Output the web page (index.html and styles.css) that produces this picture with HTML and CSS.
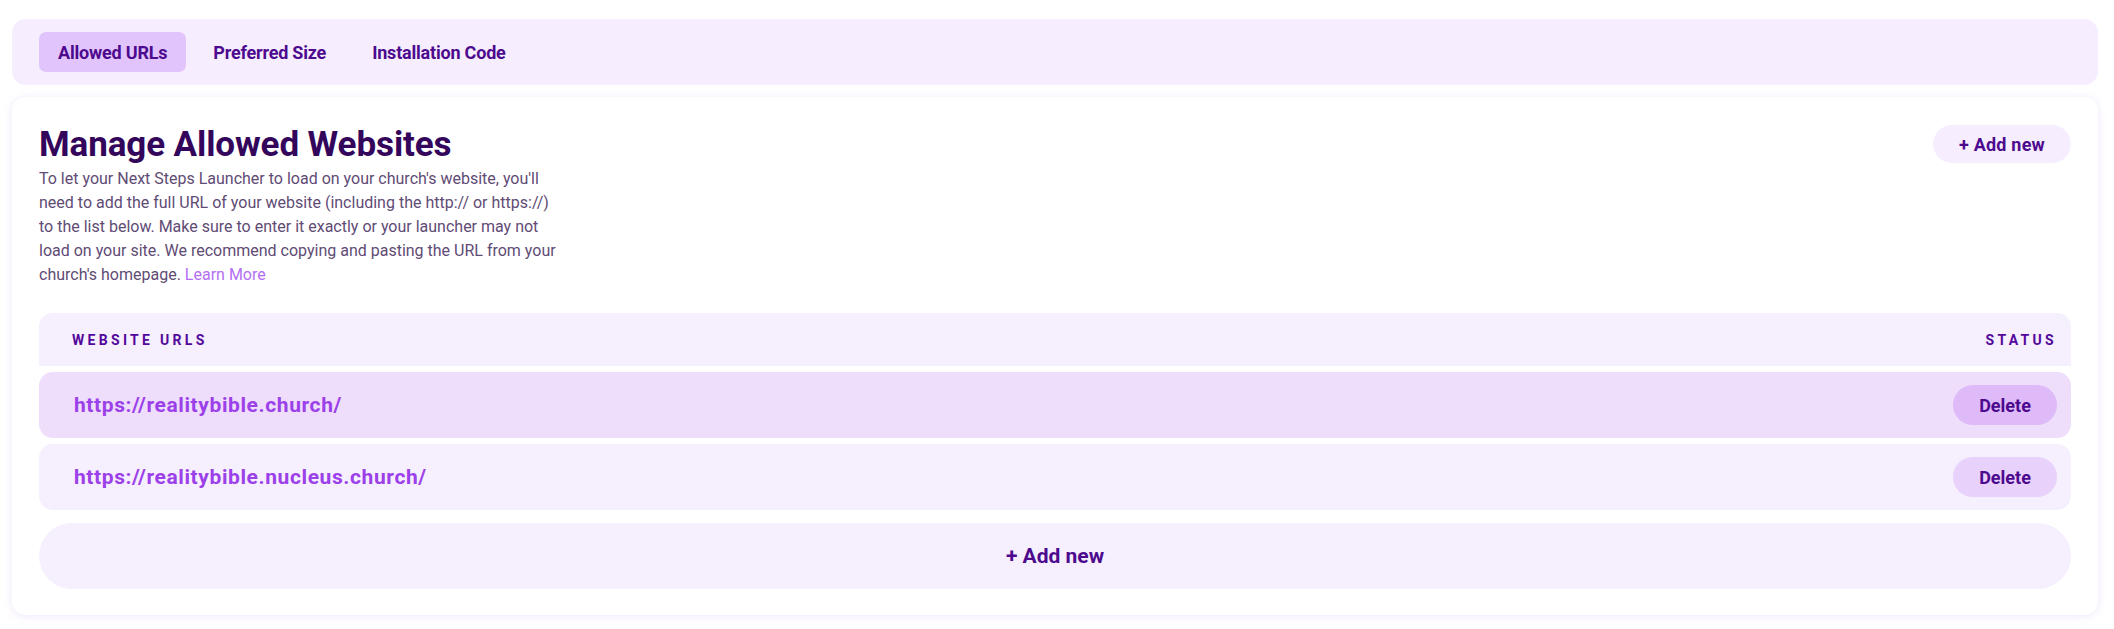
FILE: index.html
```html
<!DOCTYPE html>
<html lang="en">
<head>
<meta charset="utf-8">
<title>Manage Allowed Websites</title>
<link rel="stylesheet" href="styles.css">
</head>
<body>
<nav class="tabs">
  <button class="tab tab-active">Allowed URLs</button>
  <button class="tab">Preferred Size</button>
  <button class="tab">Installation Code</button>
</nav>
<main class="card">
  <div class="card-head">
    <div class="intro">
      <h1 class="title">Manage Allowed Websites</h1>
      <p class="desc">To let your Next Steps Launcher to load on your church's website, you'll need to add the full URL of your website (including the http:// or https://) to the list below. Make sure to enter it exactly or your launcher may not load on your site. We recommend copying and pasting the URL from your church's homepage. <a class="learn" href="#">Learn More</a></p>
    </div>
    <button class="add-small">+ Add new</button>
  </div>
  <div class="table">
    <div class="thead">
      <span>WEBSITE URLS</span>
      <span>STATUS</span>
    </div>
    <div class="row row-hover">
      <span class="url">https://realitybible.church/</span>
      <button class="delete delete-hover">Delete</button>
    </div>
    <div class="row">
      <span class="url">https://realitybible.nucleus.church/</span>
      <button class="delete">Delete</button>
    </div>
  </div>
  <button class="add-wide">+ Add new</button>
</main>
</body>
</html>
```
FILE: styles.css
```css
* { box-sizing: border-box; }
html, body { background: #ffffff; }
body {
  margin: 0;
  padding: 19px 16px 14px 12px;
  font-family: Roboto, "Liberation Sans", sans-serif;
  color: #4a0a8a;
}
button { font-family: inherit; border: 0; cursor: pointer; }

.tabs {
  display: flex;
  align-items: center;
  gap: 8px;
  height: 66px;
  padding: 0 27px;
  background: #f6eefe;
  border-radius: 14px;
}
.tab {
  height: 40px;
  padding: 0 19px;
  background: transparent;
  border-radius: 7px;
  font-size: 18px;
  font-weight: 700;
  color: #4d0a8e;
  letter-spacing: -0.2px;
}
.tab-active { background: #e2c4fc; }

.card {
  margin-top: 12px;
  background: #ffffff;
  border-radius: 14px;
  padding: 28px 27px 26px;
  box-shadow: 0 1px 10px rgba(140, 80, 220, 0.14);
}
.card-head {
  display: flex;
  justify-content: space-between;
  align-items: flex-start;
}
.intro { width: 524px; }
.title {
  margin: 0;
  font-size: 35px;
  line-height: 40px;
  font-weight: 700;
  color: #33065c;
  letter-spacing: -0.1px;
  white-space: nowrap;
}
.desc {
  margin: 2px 0 0;
  font-size: 16px;
  line-height: 24px;
  color: #5f4b75;
  letter-spacing: 0;
}
.learn { color: #b46ff4; text-decoration: none; }

.add-small {
  height: 38px;
  padding: 0 26px;
  border-radius: 19px;
  background: #f6eefe;
  font-size: 18px;
  font-weight: 700;
  color: #4d0a8e;
  letter-spacing: 0.2px;
}

.table {
  margin-top: 26px;
  display: flex;
  flex-direction: column;
  gap: 6px;
}
.thead {
  display: flex;
  justify-content: space-between;
  align-items: center;
  height: 53px;
  padding: 0 14px 0 33px;
  background: #f6effe;
  border-radius: 14px 14px 0 0;
  font-size: 14px;
  font-weight: 700;
  letter-spacing: 3.3px;
  color: #53089b;
}
.row {
  display: flex;
  justify-content: space-between;
  align-items: center;
  height: 66px;
  padding: 0 14px 0 35px;
  background: #f6effe;
  border-radius: 14px;
}
.row-hover { background: #eedefc; }
.url {
  font-size: 21px;
  font-weight: 700;
  color: #9c40e9;
  letter-spacing: 0.6px;
}
.delete {
  width: 104px;
  height: 40px;
  border-radius: 20px;
  background: #e8d1fb;
  font-size: 18px;
  font-weight: 700;
  color: #4d0a8e;
}
.delete-hover { background: #debbf8; }

.add-wide {
  display: block;
  width: 100%;
  height: 66px;
  margin-top: 13px;
  border-radius: 33px;
  background: #f6effe;
  font-size: 21px;
  font-weight: 700;
  color: #4d0a8e;
  letter-spacing: 0;
}
```
